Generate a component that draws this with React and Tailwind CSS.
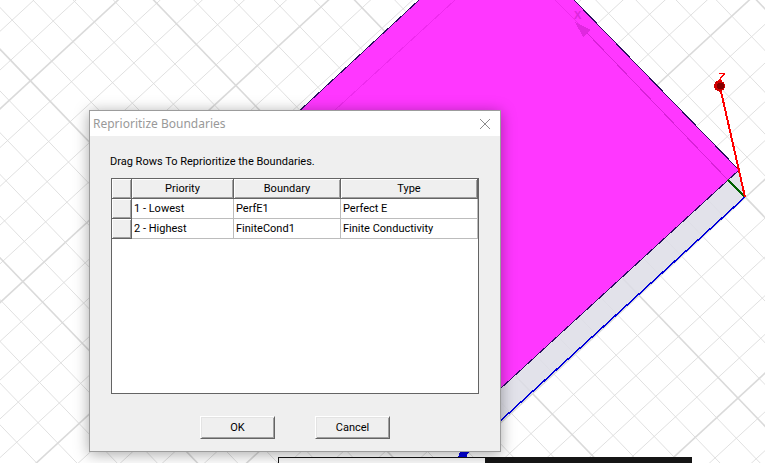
import React from "react";

// Floor grid of the 3D view: an origin and one major step along each axis.
const ORIGIN = [745.5, 197.3];
const DOWN_RIGHT = [98.9, 102.7];
const UP_RIGHT = [106.5, -98.1];

function gridLines(step, direction) {
  const lines = [];
  for (let i = -60; i <= 40; i++) {
    const x = ORIGIN[0] + (step[0] * i) / 5;
    const y = ORIGIN[1] + (step[1] * i) / 5;
    lines.push({
      key: i,
      major: i % 5 === 0,
      x1: x - direction[0] * 14,
      y1: y - direction[1] * 14,
      x2: x + direction[0] * 14,
      y2: y + direction[1] * 14,
    });
  }
  return lines;
}

function Grid() {
  const sets = [gridLines(DOWN_RIGHT, UP_RIGHT), gridLines(UP_RIGHT, DOWN_RIGHT)];
  return (
    <g shapeRendering="auto">
      {sets.map((lines, s) =>
        lines.map(({ key, major, ...pos }) => (
          <line
            key={`${s}-${key}`}
            {...pos}
            stroke={major ? "#dadada" : "#dddddd"}
            strokeWidth={major ? 1.6 : 0.9}
          />
        ))
      )}
    </g>
  );
}

function ModelView() {
  return (
    <svg className="absolute inset-0 size-full" shapeRendering="crispEdges" aria-hidden="true">
      <Grid />
      <polygon points="739,170 745,197 480,439 440,444" fill="#dcdce6" fillOpacity="0.84" />
      <polygon points="739,170 574,0 419,0 200,203 440,444" fill="#ff33ff" fillOpacity="0.98" />
      <g stroke="#2b1060" strokeWidth="1" fill="none">
        <path d="M574 0L739 170L440 444" />
        <path d="M419 0L200 203" />
      </g>
      <g stroke="#ee2bee" strokeWidth="1">
        <path d="M455 0L335 110" />
        <path d="M555 0L580 25" />
        <path d="M587 33L728 180" stroke="#d822d8" />
      </g>
      <polygon points="575,22 591,30 583,37" fill="#e028e0" />
      <text x="574" y="19" fontSize="11" fontWeight="bold" fill="#dc28dc" className="font-['Liberation_Sans']">X</text>
      <path d="M728 180L745 197" stroke="#006000" strokeWidth="1.5" />
      <path d="M745 197L462 456" stroke="#0000dc" strokeWidth="1.5" />
      <path d="M458 457L460 452L465 450L470 451L467 454V457Z" fill="#0000e0" />
      <path d="M720 87L745 197" stroke="#ff0000" strokeWidth="2" />
      <circle cx="719.5" cy="86" r="5.5" fill="#d00000" />
      <circle cx="720.5" cy="86" r="3.5" fill="#820000" />
      <path d="M719 73.500H724.500L719 80.500H722" fill="none" stroke="#ff0000" strokeWidth="1.4" />
    </svg>
  );
}

const cell = "h-5 border-b border-r border-[#bcbcbc] p-0 pl-0.5 text-left font-normal";
const head =
  "h-5 border-r border-b border-[#646464] bg-[#efefef] p-0 text-center font-normal shadow-[inset_1px_1px_0_#fff,inset_-1px_-1px_0_#a0a0a0]";

const rows = [
  ["1 - Lowest", "PerfE1", "Perfect E"],
  ["2 - Highest", "FiniteCond1", "Finite Conductivity"],
];

function BoundaryTable() {
  return (
    <div className="h-[216px] border border-[#646464] bg-white">
      <table className="w-full table-fixed border-separate border-spacing-0">
        <colgroup>
          <col className="w-5" />
          <col className="w-[102px]" />
          <col className="w-[107px]" />
          <col />
        </colgroup>
        <thead>
          <tr>
            <td className={head}></td>
            <th scope="col" className={head}>Priority</th>
            <th scope="col" className={head}>Boundary</th>
            <th scope="col" className={head}>Type</th>
          </tr>
        </thead>
        <tbody>
          {rows.map((row) => (
            <tr key={row[0]} draggable="true">
              <td className={head}></td>
              {row.map((value) => (
                <td key={value} className={cell}>{value}</td>
              ))}
            </tr>
          ))}
        </tbody>
      </table>
    </div>
  );
}

function DialogButton({ children }) {
  return (
    <button
      type="button"
      className="h-[23px] w-[75px] border border-t-white border-l-white border-r-[#646464] border-b-[#646464] bg-[#efefef] text-center shadow-[inset_1px_1px_0_#e3e3e3,inset_-1px_-1px_0_#a0a0a0]"
    >
      {children}
    </button>
  );
}

export default function App() {
  return (
    <main className="relative min-h-screen overflow-hidden bg-white font-[Roboto,'Liberation_Sans',sans-serif] text-[11px] leading-4 text-black">
      <ModelView />
      <div className="absolute top-[457px] left-[278px] flex h-4 w-[414px] border-t border-l border-[#151515] bg-[#fafafa]">
        <div className="ml-auto h-full w-[207px] bg-[#151515]" />
      </div>
      <section
        role="dialog"
        aria-labelledby="dialog-title"
        className="absolute top-[110px] left-[89px] flex h-[342px] w-[412px] flex-col border border-[#9c9c9c] bg-[#efefef] shadow-[0_2px_14px_rgba(0,0,0,0.35)]"
      >
        <header className="flex h-[25px] items-center justify-between bg-white pr-2 pl-[3px]">
          <h1 id="dialog-title" className="font-['Noto_Sans',sans-serif] text-[12px] leading-5 text-[#999999]">
            Reprioritize Boundaries
          </h1>
          <button type="button" aria-label="Close" className="flex size-3.5 items-center justify-center">
            <svg width="12" height="12" viewBox="0 0 12 12" stroke="#8c8c8c" fill="none">
              <path d="M1 1L11 11M11 1L1 11" />
            </svg>
          </button>
        </header>
        <div className="flex flex-1 flex-col px-[21px] pt-[18px] pb-3">
          <p className="mb-2 -ml-px">Drag Rows To Reprioritize the Boundaries.</p>
          <BoundaryTable />
          <div className="mt-[22px] flex justify-center gap-10">
            <DialogButton>OK</DialogButton>
            <DialogButton>Cancel</DialogButton>
          </div>
        </div>
      </section>
    </main>
  );
}
